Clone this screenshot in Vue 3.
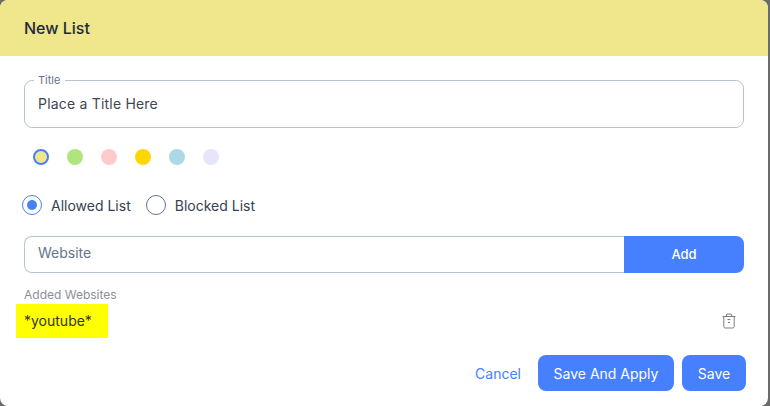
<template>
  <div class="backdrop">
    <div class="modal">
      <div class="modal-header">New List</div>
      <div class="modal-body">
        <div class="title-field">
          <span class="title-label">Title</span>
          <span class="title-value">Place a Title Here</span>
        </div>

        <div class="colors">
          <span
            v-for="(color, i) in colors"
            :key="color"
            class="color-dot"
            :class="{ selected: i === 0 }"
            :style="{ backgroundColor: color }"
          ></span>
        </div>

        <div class="radios">
          <label class="radio-item">
            <span class="radio checked"><span class="radio-inner"></span></span>
            Allowed List
          </label>
          <label class="radio-item">
            <span class="radio"></span>
            Blocked List
          </label>
        </div>

        <div class="website-row">
          <div class="website-input">Website</div>
          <button class="add-btn">Add</button>
        </div>

        <div class="added-label">Added Websites</div>
        <div class="added-row">
          <span class="site-name">*youtube*</span>
          <svg class="trash" width="14" height="16" viewBox="0 0 14 16" fill="none" stroke="#7a7f87" stroke-width="1">
            <path d="M0.5 3.5h13" />
            <path d="M4 3.5l.8-2.5h4.4l.8 2.5" />
            <path d="M1.8 3.5v10a1.5 1.5 0 0 0 1.5 1.5h7.4a1.5 1.5 0 0 0 1.5-1.5v-10" />
            <path d="M5.5 6.5h3M6 9.5h2" />
          </svg>
        </div>

        <div class="footer">
          <button class="cancel-btn">Cancel</button>
          <button class="primary-btn apply">Save And Apply</button>
          <button class="primary-btn save">Save</button>
        </div>
      </div>
    </div>
  </div>
</template>

<script setup>
const colors = ['#f0e68c', '#aee57f', '#ffcaca', '#ffd700', '#add8e6', '#e6e6fa'];
</script>

<style>
html,
body {
  margin: 0;
  background: #6b6b6b;
}
</style>

<style scoped>
.backdrop {
  width: 770px;
  height: 406px;
  overflow: hidden;
  background: #6b6b6b;
  font-family: Inter, "Liberation Sans", sans-serif;
  color: #374151;
}

.modal {
  width: 768px;
  height: 406px;
  background: #fff;
  border-radius: 8px;
  overflow: hidden;
}

.modal-header {
  height: 56px;
  box-sizing: border-box;
  padding: 0 24px;
  display: flex;
  align-items: center;
  background: #f0e68c;
  color: #1d2b3a;
  font-size: 16px;
  font-weight: 500;
}

.modal-body {
  padding: 24px 24px 0;
}

.title-field {
  position: relative;
  width: 720px;
  height: 48px;
  box-sizing: border-box;
  padding: 0 13px 2px;
  display: flex;
  align-items: center;
  border: 1px solid #b8c4d2;
  border-radius: 8px;
  font-size: 14px;
  letter-spacing: 0.2px;
  color: #3f4653;
}

.title-label {
  position: absolute;
  top: -7px;
  left: 9px;
  padding: 0 5px 0 4px;
  background: #fff;
  font-size: 11px;
  line-height: 13px;
  letter-spacing: 0;
  color: #64748b;
}

.colors {
  display: flex;
  gap: 18px;
  margin-top: 21px;
  padding-left: 9px;
}

.color-dot {
  width: 16px;
  height: 16px;
  box-sizing: border-box;
  border-radius: 50%;
}

.color-dot.selected {
  border: 2px solid #4680ff;
}

.radios {
  display: flex;
  gap: 15px;
  margin-top: 30px;
  margin-left: -2px;
}

.radio-item {
  display: flex;
  align-items: center;
  gap: 9px;
  font-size: 14px;
  color: #374151;
}

.radio {
  width: 20px;
  height: 20px;
  box-sizing: border-box;
  display: flex;
  align-items: center;
  justify-content: center;
  border: 1px solid #64748b;
  border-radius: 50%;
}

.radio.checked {
  border-color: #4680ff;
}

.radio-inner {
  width: 10px;
  height: 10px;
  border-radius: 50%;
  background: #4680ff;
}

.website-row {
  display: flex;
  width: 720px;
  height: 37px;
  margin-top: 21px;
}

.website-input {
  flex: 1;
  box-sizing: border-box;
  padding: 0 13px 4px;
  display: flex;
  align-items: center;
  border: 1px solid #b8c4d2;
  border-right: none;
  border-radius: 8px 0 0 8px;
  font-size: 14px;
  color: #64748b;
}

.add-btn {
  width: 120px;
  padding: 0 0 2px;
  border: none;
  border-radius: 0 8px 8px 0;
  background: #4680ff;
  color: #fff;
  font-family: inherit;
  font-size: 13px;
  font-weight: 500;
}

.added-label {
  margin-top: 14px;
  font-size: 12px;
  line-height: 15px;
  color: #8a8f98;
}

.added-row {
  display: flex;
  align-items: center;
  justify-content: space-between;
  width: 720px;
  height: 34px;
  margin-left: -8px;
  margin-top: 2px;
}

.site-name {
  display: flex;
  align-items: center;
  box-sizing: border-box;
  width: 92px;
  height: 34px;
  padding: 0 8px 2px;
  background: #ffff00;
  font-size: 14px;
  color: #333;
}

.trash {
  display: block;
}

.footer {
  display: flex;
  align-items: center;
  justify-content: flex-end;
  gap: 8px;
  width: 722px;
  margin-top: 17px;
}

.cancel-btn {
  margin-right: 9px;
  padding: 0;
  border: none;
  background: none;
  color: #4680ff;
  font-family: inherit;
  font-size: 14px;
}

.primary-btn {
  height: 36px;
  border: none;
  border-radius: 8px;
  background: #4680ff;
  color: #fff;
  font-family: inherit;
  font-size: 14px;
  font-weight: 400;
}

.apply {
  width: 136px;
}

.save {
  width: 64px;
}
</style>
